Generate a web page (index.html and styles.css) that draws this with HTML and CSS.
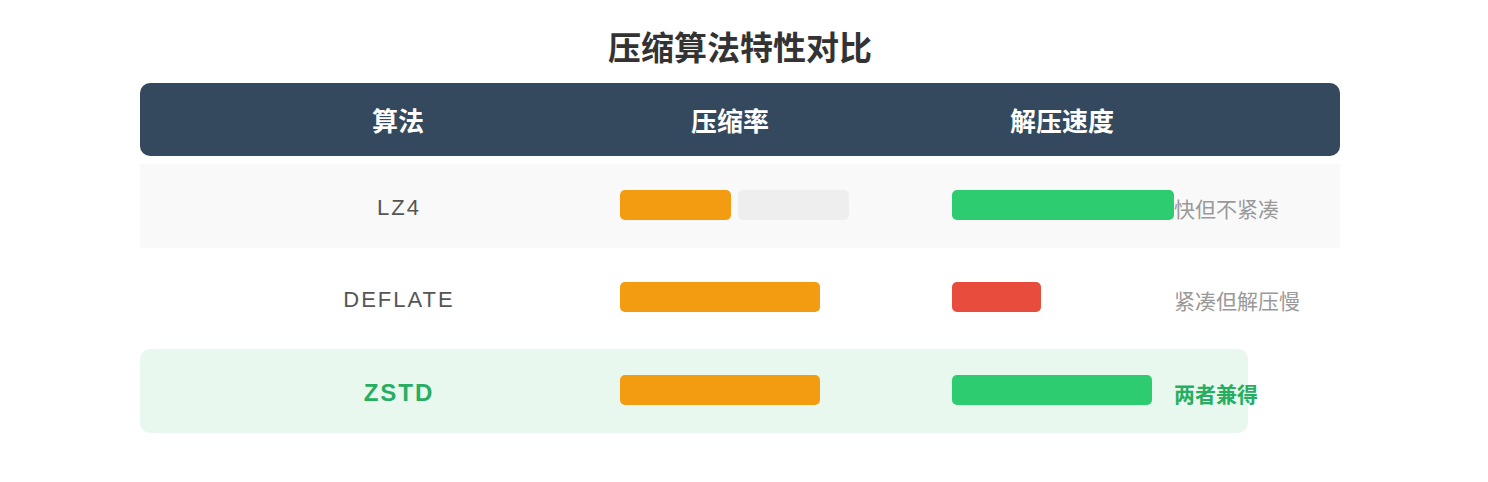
FILE: index.html
```html
<!DOCTYPE html>
<html lang="zh-CN">
<head>
<meta charset="utf-8">
<title>压缩算法特性对比</title>
<link rel="stylesheet" href="styles.css">
</head>
<body>
<div class="page">
  <h1 class="title">压缩算法特性对比</h1>
  <div class="table">
    <div class="row head">
      <div class="cell name">算法</div>
      <div class="cell ratio">压缩率</div>
      <div class="cell speed">解压速度</div>
    </div>
    <div class="row alt">
      <div class="cell name">LZ4</div>
      <div class="cell ratio"><span class="bar orange half"></span><span class="bar grey half"></span></div>
      <div class="cell speed"><span class="bar green" style="width:222px"></span></div>
      <div class="note">快但不紧凑</div>
    </div>
    <div class="row">
      <div class="cell name">DEFLATE</div>
      <div class="cell ratio"><span class="bar orange" style="width:200px"></span></div>
      <div class="cell speed"><span class="bar red" style="width:89px"></span></div>
      <div class="note">紧凑但解压慢</div>
    </div>
    <div class="row best">
      <div class="cell name">ZSTD</div>
      <div class="cell ratio"><span class="bar orange" style="width:200px"></span></div>
      <div class="cell speed"><span class="bar green" style="width:200px"></span></div>
      <div class="note">两者兼得</div>
    </div>
  </div>
</div>
</body>
</html>
```
FILE: styles.css
```css
* { box-sizing: border-box; }
html, body { margin: 0; padding: 0; background: #ffffff; }
body {
  font-family: "Liberation Sans", "Noto Sans CJK SC", sans-serif;
  color: #333;
  padding-right: 8px;
}
.page {
  width: 1200px;
  margin: 0 auto;
  padding-top: 24px;
}
.title {
  margin: 0 0 14px;
  text-align: center;
  font-family: "Noto Sans CJK SC", sans-serif;
  font-size: 33px;
  font-weight: 700;
  line-height: 45px;
  color: #333;
}
.table {
  display: flex;
  flex-direction: column;
  gap: 8px;
}
.row {
  display: flex;
  align-items: center;
  height: 84px;
  padding-left: 148px;
}
.row.head {
  height: 73px;
  background: #34495e;
  border-radius: 10px;
  color: #fff;
}
.row.alt { background: #f9f9f9; }
.row.best {
  width: 1108px;
  margin-top: 1px;
  background: #e8f8ef;
  border-radius: 10px;
}
.cell {
  flex-shrink: 0;
}
.cell.name {
  width: 220px;
  text-align: center;
  font-size: 22px;
  letter-spacing: 2px;
  color: #555;
  padding-top: 3px;
  padding-left: 2px;
}
.head .cell {
  font-family: "Noto Sans CJK SC", sans-serif;
  font-size: 26px;
  font-weight: 700;
  letter-spacing: 0;
  color: #fff;
  text-align: center;
  padding-top: 0;
  padding-left: 0;
}
.cell.ratio {
  width: 220px;
  margin-left: 112px;
  display: flex;
  gap: 7px;
  justify-content: flex-start;
}
.cell.speed {
  width: 222px;
  margin-left: 112px;
  display: flex;
}
.head .cell.ratio, .head .cell.speed {
  justify-content: center;
  width: 220px;
}
.bar {
  display: block;
  flex-shrink: 0;
  height: 30px;
  border-radius: 5px;
  margin-top: -2px;
}
.bar.half { width: 111px; }
.bar.orange { background: #f39c12; }
.bar.grey { background: #eeeeee; }
.bar.green { background: #2ecc71; }
.bar.red { background: #e74c3c; }
.note {
  flex-shrink: 0;
  font-family: "Noto Sans CJK SC", sans-serif;
  font-size: 21px;
  color: #999;
  white-space: nowrap;
  padding-top: 4px;
}
.best .cell.name {
  color: #27ae60;
  font-weight: 700;
  font-size: 24px;
}
.best .note {
  color: #27ae60;
  font-weight: 700;
}
```
